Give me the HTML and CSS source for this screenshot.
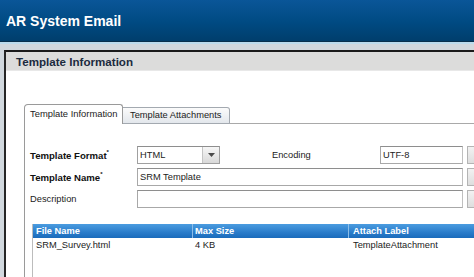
FILE: index.html
```html
<!DOCTYPE html>
<html>
<head>
<meta charset="utf-8">
<link rel="stylesheet" href="styles.css">
</head>
<body>
<div class="header"><h1 class="title">AR System Email</h1></div>
<div class="header-accent"></div>
<div class="panel">
  <div class="panel-head">Template Information</div>
  <div class="panel-body">
    <div class="tabs">
      <div class="tab active">Template Information</div>
      <div class="tab">Template Attachments</div>
      <div class="tab-fill"></div>
    </div>
    <div class="tabbody">
      <div class="form">
        <div class="row">
          <span class="lbl req">Template Format<sup>*</sup></span>
          <div class="select">
            <span class="select-val">HTML</span>
            <span class="select-btn"><svg width="7" height="4" viewBox="0 0 7 4"><path d="M0 0H7L3.5 4Z" fill="#4a4a4a"/></svg></span>
          </div>
          <span class="lbl2">Encoding</span>
          <div class="input short">UTF-8</div>
          <div class="side-btn"></div>
        </div>
        <div class="row">
          <span class="lbl req">Template Name<sup>*</sup></span>
          <div class="input long">SRM Template</div>
          <div class="side-btn"></div>
        </div>
        <div class="row">
          <span class="lbl">Description</span>
          <div class="input long"></div>
          <div class="side-btn"></div>
        </div>
      </div>
      <div class="table">
        <div class="thead">
          <div class="th c1">File Name</div>
          <div class="th c2">Max Size</div>
          <div class="th c3">Attach Label</div>
        </div>
        <div class="trow">
          <div class="td c1">SRM_Survey.html</div>
          <div class="td c2">4 KB</div>
          <div class="td c3">TemplateAttachment</div>
        </div>
      </div>
    </div>
  </div>
</div>
</body>
</html>
```
FILE: styles.css
```css
html, body {
  margin: 0;
  padding: 0;
  overflow: hidden;
  height: 100%;
}
body {
  background: #d1d8de;
  font-family: "Liberation Sans", Arial, sans-serif;
  color: #222;
  width: 474px;
}
.header {
  height: 41px;
  background: linear-gradient(#0a5698, #004a82 55%, #003e6c);
  border-bottom: 1px solid #08304e;
}
.title {
  margin: 0;
  padding: 2px 0 0 6px;
  line-height: 39px;
  font-size: 14px;
  font-weight: bold;
  color: #fff;
}
.header-accent {
  height: 2px;
  background: #bcdcee;
}
.panel {
  margin: 6px 0 0 4px;
  border-top: 2px solid #1a1a1a;
  border-left: 2px solid #262626;
  width: 468px;
  height: 225px;
  overflow: hidden;
}
.panel-head {
  height: 18px;
  line-height: 19px;
  padding-left: 10px;
  background: #dcdcdb;
  border-bottom: 1px solid #e8e8e8;
  font-size: 11.6px;
  font-weight: bold;
  color: #1b2a3e;
}
.panel-body {
  background: #fff;
  padding: 33px 0 0 18px;
  height: 173px;
  overflow: hidden;
}
.tabs {
  display: flex;
  align-items: flex-end;
  height: 20px;
}
.tab {
  box-sizing: border-box;
  height: 17px;
  width: 107px;
  border: 1px solid #a3a9b0;
  border-left: none;
  background: linear-gradient(#fbfbfb, #e3e7ec);
  font-size: 9.3px;
  line-height: 15px;
  padding-left: 7px;
  color: #222;
  border-radius: 0 3px 0 0;
}
.tab.active {
  height: 20px;
  width: 99px;
  border: 1px solid #9a9a9a;
  border-bottom: none;
  background: #fff;
  padding: 2px 0 0 5px;
  line-height: 14px;
  border-radius: 4px 3px 0 0;
  font-size: 9.4px;
}
.tab-fill {
  flex: 1;
  height: 0;
  border-bottom: 1px solid #a9a9a9;
}
.tabbody {
  border-left: 1px solid #9a9a9a;
  height: 160px;
}
.form {
  padding: 22px 0 0 5px;
  display: flex;
  flex-direction: column;
  gap: 4px;
}
.row {
  display: flex;
  align-items: center;
  height: 18px;
}
.lbl {
  width: 107px;
  flex-shrink: 0;
  font-size: 9.3px;
  color: #222;
}
.lbl.req {
  font-weight: bold;
  font-size: 9.6px;
  color: #111;
}
.lbl sup {
  font-size: 6px;
  vertical-align: top;
  line-height: 6px;
  position: relative;
  top: -1px;
}
.select {
  box-sizing: border-box;
  width: 83px;
  flex-shrink: 0;
  height: 18px;
  display: flex;
  border: 1px solid #a0a0a0;
  border-top-color: #8e8e8e;
  background: #fff;
}
.select-val {
  flex: 1;
  font-size: 9.3px;
  line-height: 16px;
  padding-left: 2px;
}
.select-btn {
  width: 16px;
  border-left: 1px solid #c4c4c4;
  background: linear-gradient(#f6f6f6, #d9d9d9);
  display: flex;
  align-items: center;
  justify-content: center;
}
.lbl2 {
  margin-left: 52px;
  width: 108px;
  flex-shrink: 0;
  font-size: 9.3px;
  color: #222;
}
.input {
  box-sizing: border-box;
  flex-shrink: 0;
  height: 18px;
  border: 1px solid #a8a8a8;
  border-top-color: #8e8e8e;
  border-right-color: #c0c0c0;
  background: #fff;
  font-size: 9.3px;
  line-height: 16px;
  padding-left: 2px;
}
.input.short { width: 83px; }
.input.long { width: 326px; }
.side-btn {
  box-sizing: border-box;
  flex-shrink: 0;
  margin-left: 4px;
  width: 18px;
  height: 18px;
  border: 1px solid #b4b4b4;
  background: linear-gradient(#f2f2f2, #dedede);
}
.table {
  margin: 16px 0 0 7px;
  border-left: 1px solid #bcbcbc;
  height: 60px;
  overflow: hidden;
}
.thead, .trow {
  display: grid;
  grid-template-columns: 159px 156px 200px;
  height: 14px;
  font-size: 9.3px;
  line-height: 14px;
}
.thead {
  background: linear-gradient(#4b9ce0, #2a7cca 60%, #1a6bbb);
  color: #fff;
  font-weight: bold;
}
.th, .td {
  padding-left: 3px;
  white-space: nowrap;
}
.th.c2, .th.c3 {
  border-left: 1px solid #8bbde8;
}
.td.c2, .td.c3 {
  border-left: 1px solid transparent;
}
.th.c2, .td.c2 { padding-left: 2px; }
.th.c3, .td.c3 { padding-left: 4px; }
.trow {
  color: #222;
}
```
